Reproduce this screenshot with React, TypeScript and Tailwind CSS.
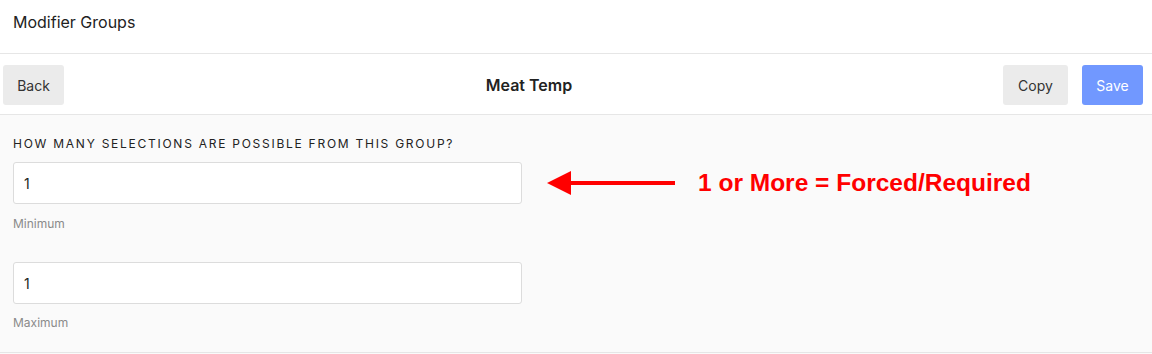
import React from 'react';

function Field({ value, hint, gap }: { value: string; hint: string; gap: string }) {
    return (
        <div className="w-[509px]">
            <input
                readOnly
                value={value}
                className="w-full h-[42px] px-[10px] bg-white border border-[#dcdcdc] rounded-[3px] text-[14px] text-[#222] outline-none"
            />
            <div className={`${gap} text-[12px] leading-[16px] text-[#8a8a8a]`}>{hint}</div>
        </div>
    );
}

export default function App() {
    return (
        <div className="w-[1152px] h-[354px] bg-[#fafafa] font-['Inter',sans-serif] overflow-hidden">
            {/* Page title */}
            <div className="h-[54px] bg-white flex items-center px-[13px] pb-[9px] border-b border-[#e6e6e6] shadow-[0_1px_2px_rgba(0,0,0,0.05)]">
                <span className="text-[16px] text-[#222]">Modifier Groups</span>
            </div>

            {/* Toolbar */}
            <div className="h-[61px] bg-white border-b border-[#e6e6e6] flex items-center pl-[3px] pr-[9px] pt-[2px]">
                <button className="h-[40px] w-[61px] bg-[#ebebeb] rounded-[3px] text-[14px] text-[#333]">Back</button>
                <span className="flex-1 text-center pr-[9px] text-[16px] font-semibold text-[#222]">Meat Temp</span>
                <div className="flex items-center gap-[14px]">
                    <button className="h-[40px] w-[65px] bg-[#ebebeb] rounded-[3px] text-[14px] text-[#333]">Copy</button>
                    <button className="h-[40px] w-[61px] bg-[#7198ff] rounded-[3px] text-[14px] text-white">Save</button>
                </div>
            </div>

            {/* Content */}
            <div className="px-[13px] pt-[21px] border-b border-[#e6e6e6] h-[238px]">
                <div className="text-[12px] tracking-[0.145em] text-[#222] leading-[16px]">HOW MANY SELECTIONS ARE POSSIBLE FROM THIS GROUP?</div>
                <div className="flex items-start mt-[10px]">
                    <Field value="1" hint="Minimum" gap="mt-[12px]" />
                    <div className="flex items-center h-[42px] ml-[25px] gap-[23px]">
                        <svg width="128" height="26" viewBox="0 0 128 26">
                            <polygon points="0,13 24,1 24,25" fill="#ff0000" />
                            <rect x="22" y="11" width="106" height="4" fill="#ff0000" />
                        </svg>
                        <span className="font-['Liberation_Sans',Arial,sans-serif] font-bold text-[24.5px] text-[#ff0000]">1 or More = Forced/Required</span>
                    </div>
                </div>
                <div className="mt-[30px]">
                    <Field value="1" hint="Maximum" gap="mt-[11px]" />
                </div>
            </div>
        </div>
    );
}
